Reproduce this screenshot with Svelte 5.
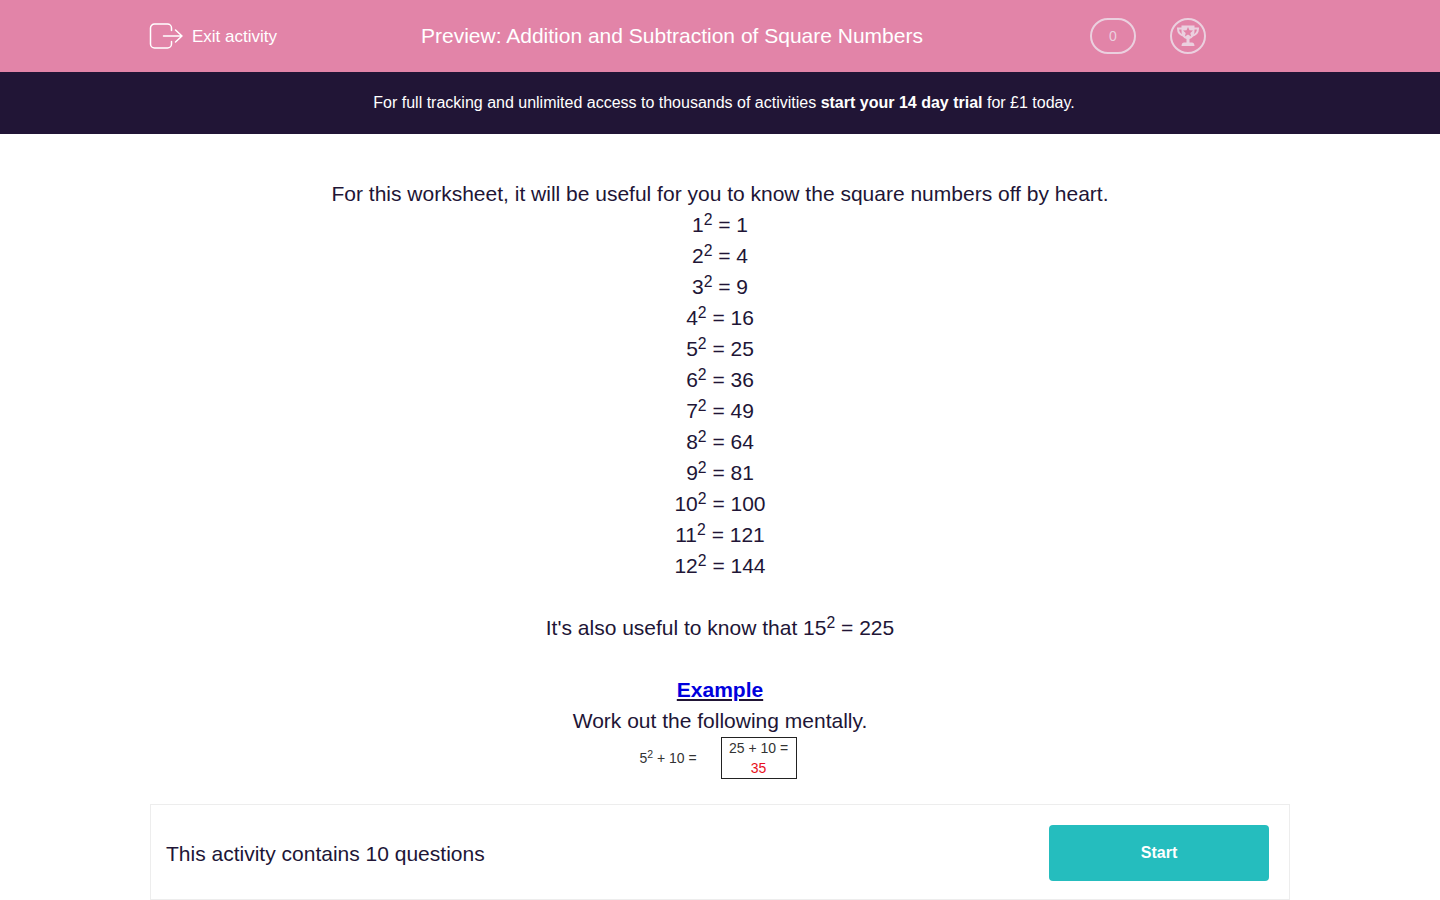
<script lang="ts">
  const squares = Array.from({ length: 12 }, (_, i) => i + 1)

  let score = $state(0)
</script>

<header class="top">
  <div class="container bar">
    <a class="exit" href="#exit">
      <svg width="34" height="26" viewBox="0 0 34 26" aria-hidden="true">
        <path d="M21.5 7.5V5a4 4 0 0 0-4-4h-13a4 4 0 0 0-4 4v16a4 4 0 0 0 4 4h13a4 4 0 0 0 4-4v-2.5" />
        <path d="M13.5 13H32M25.5 7l6.500 6-6.500 6" />
      </svg>
      Exit activity
    </a>
    <h1>Preview: Addition and Subtraction of Square Numbers</h1>
    <div class="badges">
      <span class="score">{score}</span>
      <span class="trophy">
        <svg width="24" height="24" viewBox="0 0 24 24" aria-hidden="true">
          <path class="handle" d="M6.5 4.5H2c0 4 2 6.5 6.5 7.5M17.5 4.5H22c0 4-2 6.5-6.5 7.5" />
          <path
            class="cup"
            d="M5.500 1.500h13v5c0 4.500-1.500 7.500-5 8.500v3.500h2.500c1.200 0 2.500 1 2.500 3.500h-13c0-2.500 1.300-3.500 2.500-3.500h2.500V15c-3.500-1-5-4-5-8.500z"
          />
          <path
            class="star"
            d="M12 3l1.500 3.300 3.500.3-2.700 2.400.8 3.500-3.100-1.900-3.100 1.900.8-3.500L7 6.600l3.500-.3z"
          />
        </svg>
      </span>
    </div>
  </div>
</header>

<div class="trial">
  For full tracking and unlimited access to thousands of activities <a href="#trial">start your 14 day trial</a> for £1 today.
</div>

<main class="container">
  <section class="intro">
    <p>For this worksheet, it will be useful for you to know the square numbers off by heart.</p>
    {#each squares as n}
      <p>{n}<sup>2</sup> = {n * n}</p>
    {/each}
    <p class="spaced">It's also useful to know that 15<sup>2</sup> = 225</p>
    <h2><span>Example</span></h2>
    <p>Work out the following mentally.</p>
    <div class="sum">
      <span>5<sup>2</sup> + 10 =</span>
      <div class="working">
        25 + 10 =
        <span class="answer">35</span>
      </div>
    </div>
  </section>

  <section class="start">
    <p>This activity contains 10 questions</p>
    <button type="button">Start</button>
  </section>
</main>

<style>
  :global(body) {
    background: #fff;
    color: #211536;
    font-family: 'Liberation Sans', Arial, sans-serif;
    font-size: 21px;
    line-height: 31px;
  }

  .container {
    box-sizing: border-box;
    max-width: 1140px;
    margin: 0 auto;
  }

  .top {
    background: #e284a8;
    color: #fff;
  }

  .bar {
    display: grid;
    grid-template-columns: 1fr auto 1fr;
    align-items: center;
    min-height: 72px;
    padding-right: 84px;
  }

  .exit {
    display: flex;
    align-items: center;
    gap: 8px;
    color: #fff;
    font-size: 17px;
    text-decoration: none;
  }

  .exit svg {
    overflow: visible;
    fill: none;
    stroke: #fff;
    stroke-width: 1.5;
    stroke-linecap: round;
    stroke-linejoin: round;
  }

  h1 {
    margin: 0;
    padding: 0 12px 2px 0;
    font-size: 21px;
    font-weight: 400;
    text-align: center;
  }

  .badges {
    display: flex;
    justify-content: flex-end;
    gap: 34px;
  }

  .score,
  .trophy {
    box-sizing: border-box;
    display: flex;
    align-items: center;
    justify-content: center;
    height: 36px;
    border: 2px solid #ebd0df;
    border-radius: 18px;
    color: #ebd0df;
  }

  .score {
    width: 46px;
    font-size: 14px;
  }

  .trophy {
    width: 36px;
  }

  .cup {
    fill: #ebd0df;
  }

  .star {
    fill: #e284a8;
  }

  .handle {
    fill: none;
    stroke: #ebd0df;
    stroke-width: 2;
  }

  .trial {
    padding: 15px 0 16px 8px;
    background: #211536;
    color: #fff;
    font-size: 16px;
    text-align: center;
  }

  .trial a {
    color: #fff;
    font-weight: 700;
    text-decoration: none;
  }

  .intro {
    padding: 44px 0 25px;
    text-align: center;
  }

  p {
    margin: 0;
  }

  sup {
    font-size: 75%;
    line-height: 0;
    vertical-align: 7px;
  }

  .spaced {
    margin: 31px 0;
  }

  h2 {
    margin: 0;
    font-size: 21px;
    text-decoration: underline;
  }

  h2 span {
    color: #00d;
  }

  .sum {
    display: flex;
    align-items: center;
    justify-content: center;
    gap: 24px;
    margin-top: 1px;
    padding-right: 4px;
    color: #333;
    font-size: 14px;
    line-height: 20px;
  }

  .sum sup {
    vertical-align: 5px;
  }

  .working {
    box-sizing: border-box;
    width: 76px;
    border: 1px solid #222;
  }

  .answer {
    display: block;
    color: #e8101c;
  }

  .start {
    display: flex;
    align-items: center;
    justify-content: space-between;
    padding: 20px 20px 18px 15px;
    border: 1px solid #ededed;
  }

  button {
    width: 220px;
    height: 56px;
    border: 0;
    border-radius: 4px;
    background: #25bdbe;
    color: #fff;
    font: 700 16px 'Liberation Sans', Arial, sans-serif;
    cursor: pointer;
  }
</style>
